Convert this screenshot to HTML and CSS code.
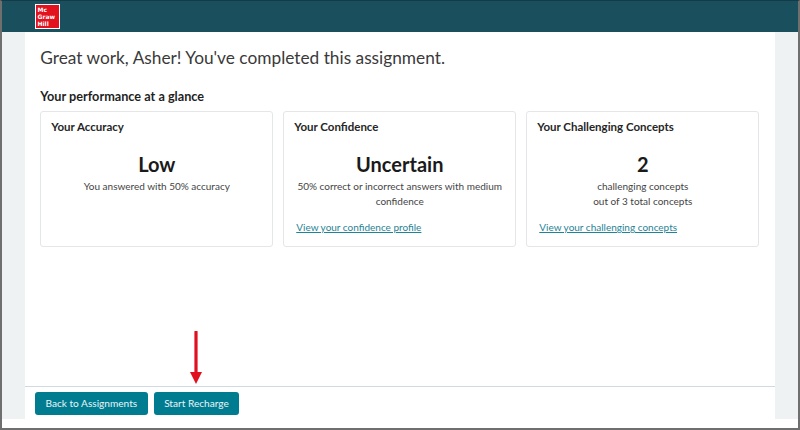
FILE: index.html
```html
<!DOCTYPE html>
<html lang="en">
<head>
<meta charset="utf-8">
<title>Assignment complete</title>
<link rel="stylesheet" href="styles.css">
</head>
<body>
<div class="frame">
  <header class="topbar">
    <div class="logo"><span>Mc</span><span>Graw</span><span>Hill</span></div>
  </header>
  <div class="backdrop">
    <main class="sheet">
      <div class="content">
        <h1 class="headline">Great work, Asher! You've completed this assignment.</h1>
        <h2 class="subhead">Your performance at a glance</h2>
        <div class="cards">
          <section class="card">
            <h3 class="card-title">Your Accuracy</h3>
            <p class="metric">Low</p>
            <p class="detail">You answered with 50% accuracy</p>
          </section>
          <section class="card">
            <h3 class="card-title">Your Confidence</h3>
            <p class="metric">Uncertain</p>
            <p class="detail">50% correct or incorrect answers with medium confidence</p>
            <a class="card-link" href="#">View your confidence profile</a>
          </section>
          <section class="card">
            <h3 class="card-title">Your Challenging Concepts</h3>
            <p class="metric">2</p>
            <p class="detail">challenging concepts<br>out of 3 total concepts</p>
            <a class="card-link" href="#">View your challenging concepts</a>
          </section>
        </div>
      </div>
      <footer class="actions">
        <button class="btn" type="button">Back to Assignments</button>
        <button class="btn" type="button">Start Recharge</button>
      </footer>
    </main>
  </div>
  <svg class="arrow" width="16" height="54" viewBox="0 0 16 54" aria-hidden="true">
    <path d="M8 1V42" stroke="#e0101f" stroke-width="3.2" stroke-linecap="round" fill="none"/>
    <path d="M2 41H14L8 53Z" fill="#e0101f"/>
  </svg>
</div>
</body>
</html>
```
FILE: styles.css
```css
* { box-sizing: border-box; }
html, body { margin: 0; padding: 0; }
body {
  width: 800px;
  height: 430px;
  overflow: hidden;
  background: #fff;
  font-family: "Lato", "Liberation Sans", sans-serif;
  color: #1f1f1f;
}
.frame {
  position: relative;
  width: 800px;
  height: 430px;
  display: flex;
  flex-direction: column;
  border-left: 2px solid #6f6f6f;
  border-right: 2px solid #6f6f6f;
  border-bottom: 2px solid #6f6f6f;
  border-top: 1px solid #123a47;
  padding-bottom: 9px;
}
.topbar {
  flex: 0 0 31px;
  background: #1a4f5e;
  padding: 3px 0 0 33px;
}
.logo {
  width: 25px;
  height: 25px;
  background: #e2131f;
  border: 1px solid #fff;
  color: #fff;
  font: 700 6px/7px "DejaVu Sans", sans-serif;
  padding: 1px 0 0 1.5px;
  display: flex;
  flex-direction: column;
}
.backdrop {
  flex: 1;
  min-height: 0;
  background: #eef2f3;
  padding: 0 23px;
  display: flex;
}
.sheet {
  flex: 1;
  background: #fff;
  display: flex;
  flex-direction: column;
}
.content {
  flex: 1;
  padding: 15px 15px 0 15.25px;
}
.headline {
  margin: 0;
  font-size: 17.3px;
  line-height: 22px;
  font-weight: 400;
  color: #3a3a3a;
}
.subhead {
  margin: 18px 0 0;
  font-size: 12.7px;
  line-height: 18px;
  font-weight: 700;
  color: #1f1f1f;
}
.cards {
  margin-top: 6px;
  display: grid;
  grid-template-columns: 233px 233px 233px;
  column-gap: 10px;
}
.card {
  height: 136px;
  border: 1px solid #e4e6e7;
  border-radius: 3px;
  padding: 8px 10px 0;
  display: flex;
  flex-direction: column;
}
.card-title {
  margin: 0;
  font-size: 11.5px;
  line-height: 14px;
  font-weight: 700;
  color: #262626;
}
.metric {
  margin: 18px 0 0;
  text-align: center;
  font-size: 20px;
  line-height: 24px;
  font-weight: 700;
  color: #1a1a1a;
}
.detail {
  margin: 3px 0 0;
  text-align: center;
  font-size: 10px;
  line-height: 15px;
  color: #444;
}
.card-link {
  margin: 11px 0 0 2px;
  font-size: 10px;
  line-height: 14px;
  color: #1f8496;
  text-decoration: underline;
}
.actions {
  flex: 0 0 33px;
  border-top: 1px solid #cfdbe0;
  padding: 5px 0 0 10px;
  display: flex;
  align-items: flex-start;
  gap: 6px;
}
.btn {
  height: 23px;
  padding: 0 10.5px;
  border: 0;
  border-radius: 3px;
  background: #007c91;
  color: #eaf5f7;
  font: 400 10.1px/23px "Lato", "Liberation Sans", sans-serif;
}
.arrow {
  position: absolute;
  left: 186px;
  top: 330px;
}
```
